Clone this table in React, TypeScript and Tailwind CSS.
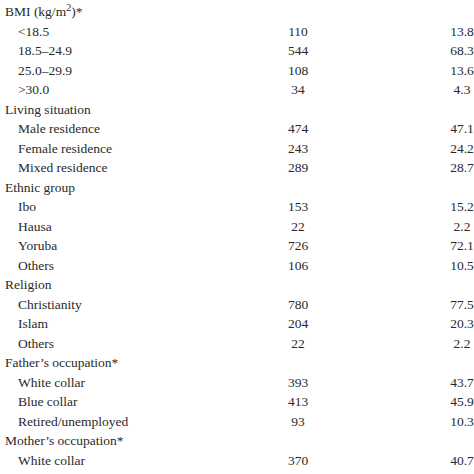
type Row = { label: React.ReactNode; sub?: boolean; n?: string; pct?: string };

const rows: Row[] = [
  { label: (<>BMI (kg/m<sup>2</sup>)*</>) },
  { label: "<18.5", sub: true, n: "110", pct: "13.8" },
  { label: "18.5–24.9", sub: true, n: "544", pct: "68.3" },
  { label: "25.0–29.9", sub: true, n: "108", pct: "13.6" },
  { label: ">30.0", sub: true, n: "34", pct: "4.3" },
  { label: "Living situation" },
  { label: "Male residence", sub: true, n: "474", pct: "47.1" },
  { label: "Female residence", sub: true, n: "243", pct: "24.2" },
  { label: "Mixed residence", sub: true, n: "289", pct: "28.7" },
  { label: "Ethnic group" },
  { label: "Ibo", sub: true, n: "153", pct: "15.2" },
  { label: "Hausa", sub: true, n: "22", pct: "2.2" },
  { label: "Yoruba", sub: true, n: "726", pct: "72.1" },
  { label: "Others", sub: true, n: "106", pct: "10.5" },
  { label: "Religion" },
  { label: "Christianity", sub: true, n: "780", pct: "77.5" },
  { label: "Islam", sub: true, n: "204", pct: "20.3" },
  { label: "Others", sub: true, n: "22", pct: "2.2" },
  { label: "Father’s occupation*" },
  { label: "White collar", sub: true, n: "393", pct: "43.7" },
  { label: "Blue collar", sub: true, n: "413", pct: "45.9" },
  { label: "Retired/unemployed", sub: true, n: "93", pct: "10.3" },
  { label: "Mother’s occupation*" },
  { label: "White collar", sub: true, n: "370", pct: "40.7" },
];

export default function App() {
  return (
    <div className="w-[474px] h-[474px] overflow-hidden bg-white text-[#2a2a2a] font-['Liberation_Serif',serif] text-[13.5px] leading-[19.5px]">
      <div className="w-[492px] pt-[2px] flex flex-col">
        {rows.map((r, i) => (
          <div key={i} className="flex h-[19.5px] items-center">
            <div className={r.sub ? "w-[258px] pl-[18px] whitespace-nowrap" : "w-[258px] pl-[5px] whitespace-nowrap"}>
              {r.label}
            </div>
            <div className="w-[80px] text-center">{r.n}</div>
            <div className="w-[94px]" />
            <div className="w-[60px] text-center">{r.pct}</div>
          </div>
        ))}
      </div>
    </div>
  );
}
